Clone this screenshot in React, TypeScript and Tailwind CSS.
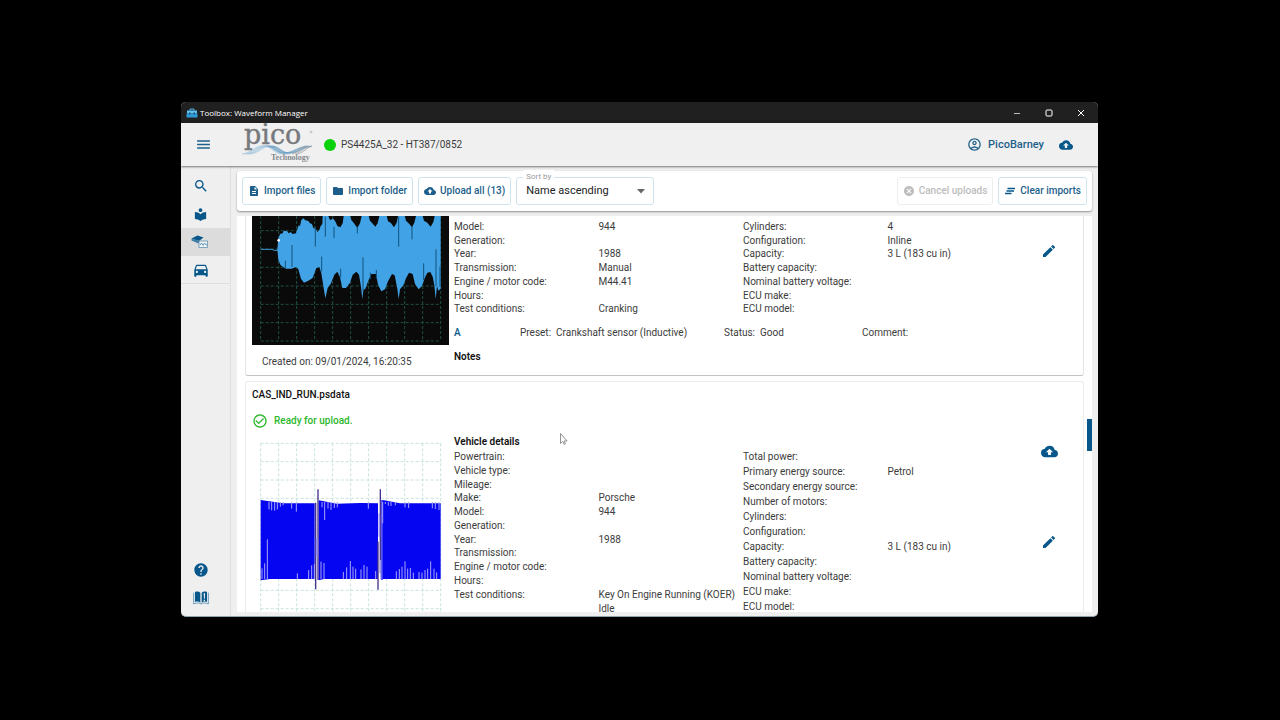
import React from 'react';
import {
  MdBackup,
  MdCancel,
  MdCheckCircleOutline,
  MdDescription,
  MdDirectionsCar,
  MdEdit,
  MdFolder,
  MdHelp,
  MdLocalLibrary,
  MdMenu,
  MdOutlineAccountCircle,
  MdSearch,
} from 'react-icons/md';

type Detail = { label: string; value?: string; tall?: boolean };

const crankLeft: Detail[] = [
  { label: 'Model:', value: '944' },
  { label: 'Generation:' },
  { label: 'Year:', value: '1988' },
  { label: 'Transmission:', value: 'Manual' },
  { label: 'Engine / motor code:', value: 'M44.41' },
  { label: 'Hours:' },
  { label: 'Test conditions:', value: 'Cranking' },
];

const crankRight: Detail[] = [
  { label: 'Cylinders:', value: '4' },
  { label: 'Configuration:', value: 'Inline' },
  { label: 'Capacity:', value: '3 L (183 cu in)' },
  { label: 'Battery capacity:' },
  { label: 'Nominal battery voltage:' },
  { label: 'ECU make:' },
  { label: 'ECU model:' },
];

const runLeft: Detail[] = [
  { label: 'Powertrain:' },
  { label: 'Vehicle type:' },
  { label: 'Mileage:' },
  { label: 'Make:', value: 'Porsche' },
  { label: 'Model:', value: '944' },
  { label: 'Generation:' },
  { label: 'Year:', value: '1988' },
  { label: 'Transmission:' },
  { label: 'Engine / motor code:' },
  { label: 'Hours:' },
  { label: 'Test conditions:', value: 'Key On Engine Running (KOER) Idle', tall: true },
];

const runRight: Detail[] = [
  { label: 'Total power:' },
  { label: 'Primary energy source:', value: 'Petrol' },
  { label: 'Secondary energy source:' },
  { label: 'Number of motors:' },
  { label: 'Cylinders:' },
  { label: 'Configuration:' },
  { label: 'Capacity:', value: '3 L (183 cu in)' },
  { label: 'Battery capacity:' },
  { label: 'Nominal battery voltage:' },
  { label: 'ECU make:' },
  { label: 'ECU model:' },
];

const columns = [62, 116, 170, 224, 278, 332, 386, 440, 494, 548, 602];

const ToolboxIcon = () => (
  <svg width="12" height="12" viewBox="0 0 24 24" aria-hidden="true">
    <path d="M8 7V4h8v3" fill="none" stroke="#4db4e6" strokeWidth="2" />
    <path d="M2 7h20v6H2z" fill="#5cc4f2" />
    <path d="M1 13h22v8H1z" fill="#2f9bd6" />
    <path d="M6 11h3v4H6zM15 11h3v4h-3z" fill="#12507c" />
  </svg>
);

const PicoLogo = () => (
  <svg width="72" height="36" viewBox="0 0 72 36" className="overflow-visible" role="img" aria-label="Pico Technology">
    <g fill="none" strokeWidth="0.8">
      {[0, 2, 4, 6, 8].map((d) => (
        <path key={d} d={`M${d} 27C${10 + d} 26 ${12 + d} 19 ${21 + d} 19S${32 + d} 27 ${40 + d} 27`} stroke="#a3c8de" />
      ))}
      {[0, 2, 4, 6].map((d) => (
        <path key={d} d={`M${24 + d} 19C${32 + d} 20 ${34 + d} 26 ${42 + d} 26S${54 + d} 21 ${64 + d} 19`} stroke="#6f9fc2" />
      ))}
      {[0, 3, 6].map((d) => (
        <path key={d} d={`M${50 + d} 27C${56 + d} 25 ${58 + d} 21 ${64 + d} 19`} stroke="#9a9ea3" />
      ))}
    </g>
    <text x="2" y="17" fontFamily="'DejaVu Serif', serif" fontSize="27" fill="#77797c" stroke="#77797c" strokeWidth="0.4">pico</text>
    <circle cx="69" cy="5" r="1" fill="none" stroke="#999" strokeWidth="0.5" />
    <text x="29" y="33" fontFamily="'Liberation Serif', serif" fontSize="8" fontWeight="700" fill="#84888c">Technology</text>
  </svg>
);

const WaveLibraryIcon = () => (
  <svg width="18" height="16" viewBox="0 0 36 32" aria-hidden="true">
    <path d="M1 9 13 3l12 4-9 7z" fill="#07578a" />
    <path d="M1 9v4l14 6 2-2v-3z" fill="#3f7ca5" />
    <rect x="16" y="14" width="17" height="13" fill="#eef3f6" stroke="#5f8dac" strokeWidth="1.5" />
    <path d="m18 22 3-4 3 5 3-5 3 4h2" fill="none" stroke="#3f7ca5" strokeWidth="1.5" />
  </svg>
);

const ManualIcon = () => (
  <svg width="16" height="16" viewBox="0 0 24 24" aria-hidden="true">
    <path d="M1 4v17c4-2 8-2 11 0 3-2 7-2 11 0V4" fill="none" stroke="#6c9dbd" strokeWidth="1.5" />
    <path d="M3 3c3-1 6-1 8 1v15c-2-2-5-2-8-1z" fill="#07578a" />
    <path d="M13 4c2-2 5-2 8-1v15c-3-1-6-1-8 1z" fill="#07578a" />
    <path d="M16 5h2l-.4 8h-1.200zM16 14.500h2v2h-2z" fill="#fff" />
  </svg>
);

const ClearIcon = () => (
  <svg width="12" height="12" viewBox="0 0 12 12" aria-hidden="true">
    <path d="M3.500 3.500H11M2.500 6H10M1 8.500h6.500" stroke="#07578a" strokeWidth="1.4" />
  </svg>
);

// dark theme preview, the top of it is scrolled away
const CrankWave = () => (
  <svg viewBox="36 18 591 387" className="block w-full bg-[#0a0a0a]" role="img" aria-label="Cranking waveform">
    <g stroke="#1f5045" strokeWidth="3" strokeDasharray="9 6">
      {columns.map((x) => <path key={x} d={`M${x} 18V393`} />)}
      {[62, 117, 172, 228, 283, 338, 393].map((y) => <path key={y} d={`M62 ${y}H602`} />)}
    </g>
    <path d="M62 118h34l6 3h12" fill="none" stroke="#3a93d0" strokeWidth="3" />
    <path
      fill="#42a2e6"
      d="M112 118 115 86 120 72 128 70 131 62 142 64 146 70 152 66 158 72 168 70 176 46 180 48 184 30 190 25 196 31 205 33 210 40 216 42 220 54 228 58 232 66 238 60 242 48 247 42 248 18 265 18 270 30 280 26 287 36 292 48 301 52 308 40 311 18 330 18 334 30 342 40 352 54 360 40 365 18 386 18 390 32 397 40 406 50 413 40 418 18 440 18 444 34 452 38 462 52 470 38 474 18 494 18 498 32 506 40 516 52 523 38 528 18 548 18 552 32 562 38 572 50 580 36 584 18 602 18 602 236 595 242 591 228 587 268 583 226 578 200 571 186 562 188 554 205 546 228 536 238 525 222 518 192 507 188 498 205 490 226 480 238 476 268 472 236 464 196 456 192 444 214 435 238 424 244 414 224 408 192 394 192 385 212 376 236 370 240 367 268 363 230 357 194 349 185 338 194 330 218 318 234 307 234 300 202 292 185 283 194 273 220 263 234 256 265 251 234 244 190 238 171 229 174 218 204 205 212 192 218 183 206 175 178 169 171 154 176 138 176 122 166 115 150z"
    />
    <path
      d="M136 152v24M156 105v66M226 50v60M245 140v44M256 20v60M282 50v34M302 176v26M352 50v20M369 142v100M391 188v20M409 180v26M476 20v90M516 50v38M551 160v50M588 118v110M600 170v60"
      stroke="#12537f"
      strokeWidth="3"
    />
    <circle cx="116" cy="91" r="4" fill="#fff" />
  </svg>
);

const spikes = [
  [66, 565], [74, 550], [82, 478], [172, 580], [206, 570], [215, 556], [223, 552], [243, 545], [252, 549],
  [310, 576], [320, 562], [331, 543], [339, 560], [347, 566], [363, 568], [372, 555], [381, 560], [407, 573],
  [422, 540], [469, 574], [478, 567], [486, 560], [495, 544], [503, 566], [511, 564], [520, 578], [537, 576],
  [546, 578], [555, 570], [563, 566], [572, 544], [582, 566], [590, 577],
];

const notches = [
  [87, 388], [95, 391], [104, 392], [112, 388], [121, 380], [129, 376], [155, 386], [169, 395], [246, 382],
  [254, 420], [264, 386], [273, 390], [283, 384], [292, 382], [385, 386], [428, 430], [436, 372], [445, 377],
  [453, 378], [466, 376], [495, 382], [506, 384], [577, 385], [586, 387], [597, 390],
];

const RunWave = () => (
  <svg viewBox="36 180 591 546" className="block w-full" role="img" aria-label="Running waveform">
    <g stroke="#c8e2e0" strokeWidth="3" strokeDasharray="9 6">
      {columns.map((x) => <path key={x} d={`M${x} 190V726`} />)}
      {[190, 245, 300, 355, 631, 686].map((y) => <path key={y} d={`M62 ${y}H605`} />)}
    </g>
    <path d="M62 360 130 370H224V597H90L62 601zM236 361 290 371 360 369 414 370V597H252L236 601zM428 360 480 370H602V597H428z" fill="#0505f2" />
    <path d="M227 368V628M414 485V629M421 328V580M234 328V600" stroke="#46308f" strokeWidth="4" />
    <path d="M230 475V530M418 400V470" stroke="#9b91f7" strokeWidth="5" />
    <path d="M426 360V600" stroke="#0505f2" strokeWidth="4" />
    <g stroke="#a9a4f5" strokeWidth="3">
      {spikes.map(([x, y]) => <path key={x} d={`M${x} ${y}V597`} />)}
      {notches.map(([x, y]) => <path key={x} d={`M${x} 366V${y}`} />)}
    </g>
  </svg>
);

const DetailList = ({ items }: { items: Detail[] }) => (
  <dl className="grid h-full flex-1 auto-rows-fr">
    {items.map((item) => (
      <div key={item.label} className={item.tall ? 'row-span-2 grid grid-cols-2' : 'grid grid-cols-2'}>
        <dt>{item.label}</dt>
        <dd>{item.value}</dd>
      </div>
    ))}
  </dl>
);

const ToolButton = ({ icon, children, disabled }: { icon: React.ReactNode; children: React.ReactNode; disabled?: boolean }) => (
  <button
    type="button"
    disabled={disabled}
    className="flex h-7 items-center gap-1 whitespace-nowrap rounded-[3px] border border-[#cfe3ee] px-[5px] text-[10px] font-medium text-[#1d5f8a] disabled:border-[#eeeeee] disabled:text-[#bdbdbd]"
  >
    {icon}
    {children}
  </button>
);

const Sidebar = () => (
  <nav className="flex w-[50px] shrink-0 flex-col border-r border-[#e0e0e0] pb-1 pt-1.5 text-[#07578a]">
    <button type="button" aria-label="Search" className="flex h-7 items-center pl-3"><MdSearch size={16} /></button>
    <button type="button" aria-label="Library" className="flex h-7 items-center pl-3"><MdLocalLibrary size={15} /></button>
    <button type="button" aria-label="Waveforms" className="flex h-7 items-center bg-[#dcdcdc] pl-2.5"><WaveLibraryIcon /></button>
    <button type="button" aria-label="Vehicle" className="flex h-7 items-center border-b border-[#dedede] pl-[11px]"><MdDirectionsCar size={18} /></button>
    <div className="mt-auto">
      <button type="button" aria-label="Help" className="flex h-7 items-center pl-3"><MdHelp size={16} /></button>
      <button type="button" aria-label="Manual" className="flex h-7 items-center pl-3"><ManualIcon /></button>
    </div>
  </nav>
);

export default function App() {
  return (
    <div className="relative flex h-screen flex-col bg-black pb-[103px] pl-[181px] pr-[182px] pt-[102px] font-['Roboto',sans-serif] text-[10px] leading-[14px] text-[#3c3c3c]">
      <div className="flex min-h-0 flex-1 flex-col overflow-hidden rounded-[5px] border-b border-[#8fa3ad] bg-[#efefef]">
        <div className="flex h-[21px] shrink-0 items-center bg-[#202020] pl-[5px] pr-px text-white">
          <ToolboxIcon />
          <span className="ml-0.5 font-['Open_Sans',sans-serif] text-[8px]">Toolbox: Waveform Manager</span>
          <div className="ml-auto flex items-center">
            <button type="button" aria-label="Minimize" className="flex w-8 justify-center">
              <svg width="8" height="8" viewBox="0 0 8 8"><path d="M1 4.500h6" stroke="#bbb" /></svg>
            </button>
            <button type="button" aria-label="Maximize" className="flex w-8 justify-center">
              <svg width="8" height="8" viewBox="0 0 8 8"><rect x="1" y="1" width="6" height="6" rx="1" fill="none" stroke="#fff" /></svg>
            </button>
            <button type="button" aria-label="Close" className="flex w-8 justify-center">
              <svg width="8" height="8" viewBox="0 0 8 8"><path d="m1 1 6 6M7 1 1 7" stroke="#fff" /></svg>
            </button>
          </div>
        </div>

        <header className="z-10 flex h-[43px] shrink-0 items-center bg-[#f0f0f0] pr-[25px] shadow-[0_1px_2px_rgba(0,0,0,0.5)]">
          <button type="button" aria-label="Menu" className="ml-3.5 mr-[30px] text-[#1d5f8a]"><MdMenu size={17} /></button>
          <PicoLogo />
          <span className="ml-2.5 size-3 rounded-full bg-[#0bd10b]" />
          <span className="ml-[5px]">PS4425A_32 - HT387/0852</span>
          <button type="button" className="ml-auto flex items-center gap-1.5 text-[11px] font-medium text-[#1d5f8a]">
            <MdOutlineAccountCircle size={15} />
            PicoBarney
          </button>
          <button type="button" aria-label="Uploads" className="ml-[15px] text-[#07578a]"><MdBackup size={14} /></button>
        </header>

        <div className="flex min-h-0 flex-1">
          <Sidebar />
          <main className="flex min-w-0 flex-1 flex-col gap-[5px] pb-1 pl-1.5 pr-1.5 pt-[5px]">
            <div className="flex h-10 shrink-0 items-center gap-[5px] rounded-[3px] bg-white px-[5px] shadow-[0_1px_2px_rgba(0,0,0,0.4)]">
              <ToolButton icon={<MdDescription size={12} />}>Import files</ToolButton>
              <ToolButton icon={<MdFolder size={12} />}>Import folder</ToolButton>
              <ToolButton icon={<MdBackup size={12} />}>Upload all (13)</ToolButton>
              <div className="relative flex h-7 w-[138px] items-center rounded-[3px] border border-[#cfe3ee]">
                <label htmlFor="sort" className="absolute -top-2 left-1.5 bg-white px-[3px] text-[8px] leading-[14px] text-[#9a9a9a]">Sort by</label>
                <select id="sort" defaultValue="Name ascending" className="w-full appearance-none bg-transparent pl-[9px] text-[11px] text-[#222] outline-none">
                  <option>Name ascending</option>
                  <option>Name descending</option>
                </select>
                <svg className="pointer-events-none absolute right-2 top-[11px]" width="8" height="5" viewBox="0 0 8 5">
                  <path d="M0 0h8L4 4.500z" fill="#666" />
                </svg>
              </div>
              <div className="ml-auto flex gap-[5px]">
                <ToolButton disabled icon={<MdCancel size={12} />}>Cancel uploads</ToolButton>
                <ToolButton icon={<ClearIcon />}>Clear imports</ToolButton>
              </div>
            </div>

            <div className="relative min-h-0 flex-1 overflow-hidden bg-white px-2">
              <article className="mb-[5px] flex h-40 gap-[5px] rounded-b-[3px] border-x border-b border-[#e4e4e4] border-b-[#c4c4c4] pl-1.5 pr-[17px]">
                <div className="w-[197px] shrink-0">
                  <CrankWave />
                  <p className="mt-2.5 pl-2.5">Created on: 09/01/2024, 16:20:35</p>
                </div>
                <div className="flex-1 pt-1">
                  <div className="flex h-[96px]">
                    <DetailList items={crankLeft} />
                    <DetailList items={crankRight} />
                  </div>
                  <div className="mt-2.5 flex whitespace-pre">
                    <span className="w-[66px] font-medium text-[#07578a]">A</span>
                    <span className="w-[204px]">Preset:  Crankshaft sensor (Inductive)</span>
                    <span className="w-[138px]">Status:  Good</span>
                    <span>Comment:</span>
                  </div>
                  <h3 className="mt-2.5 font-semibold text-[#111]">Notes</h3>
                </div>
                <div className="-ml-[5px] flex w-[34px] shrink-0 flex-col items-center pt-[27px] text-[#07578a]">
                  <button type="button" aria-label="Edit"><MdEdit size={16} /></button>
                </div>
              </article>

              <article className="rounded-t-[3px] border-x border-t border-[#ececec] pl-1.5 pr-[17px] pt-1.5">
                <h2 className="font-medium text-[#111]">CAS_IND_RUN.psdata</h2>
                <p className="mt-[11px] flex items-center gap-1.5 font-medium text-[#2cb82c]">
                  <MdCheckCircleOutline size={16} />
                  Ready for upload.
                </p>
                <div className="mt-1.5 flex gap-[5px]">
                  <div className="w-[197px] shrink-0 pt-[5px]"><RunWave /></div>
                  <div className="flex-1">
                    <h3 className="mb-px font-semibold text-[#111]">Vehicle details</h3>
                    <div className="flex h-[165px]">
                      <DetailList items={runLeft} />
                      <DetailList items={runRight} />
                    </div>
                  </div>
                  <div className="-ml-[5px] flex w-[34px] shrink-0 flex-col items-center gap-[74px] pt-2 text-[#07578a]">
                    <button type="button" aria-label="Upload"><MdBackup size={17} /></button>
                    <button type="button" aria-label="Edit"><MdEdit size={16} /></button>
                  </div>
                </div>
              </article>
              <span className="absolute right-0 top-[203px] h-8 w-[5px] bg-[#07578a]" />
            </div>
          </main>
        </div>
      </div>

      <svg className="pointer-events-none absolute left-[560px] top-[433px]" width="8" height="12" viewBox="0 0 8 12" aria-hidden="true">
        <path d="M.5.500v10l2.300-2 1.500 3 1.200-.6-1.400-2.900h3z" fill="#fff" stroke="#777" strokeWidth="0.8" />
      </svg>
    </div>
  );
}
